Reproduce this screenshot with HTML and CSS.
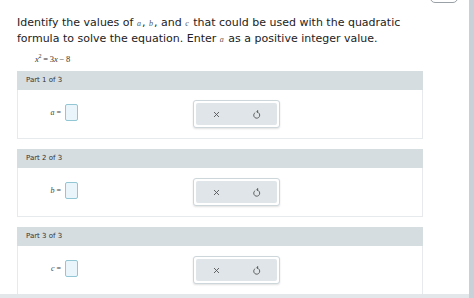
FILE: index.html
```html
<!doctype html>
<html lang="en">
  <head>
    <meta charset="UTF-8" />
    <meta name="viewport" content="width=device-width, initial-scale=1.0" />
    <title>Quadratic Formula Coefficients</title>
    <link rel="stylesheet" href="styles.css">
  </head>
  <body>
    <div class="app">
      <div class="page">
        <div class="toolbar">
          <span class="ebook">eBook</span>
        </div>

        <div class="question">
          Identify the values of <i class="var">a</i>, <i class="var">b</i>, and <i class="var">c</i> that could be used with the quadratic
          formula to solve the equation. Enter <i class="var">a</i> as a positive integer value.
        </div>

        <div class="equation">
          <i>x</i><sup>2</sup> = 3<i>x</i> &minus; 8
        </div>

        <!-- Part 1 -->
        <div class="part">
          <div class="part-header">Part 1 of 3</div>
          <div class="part-body">
            <div class="answer">
              <span class="label"><i>a</i> =</span>
              <span class="input-box"></span>
            </div>
            <div class="controls">
              <div class="controls-inner">
                <span class="ctrl">
                  <svg width="7" height="7" viewBox="0 0 7 7">
                    <path d="M1 1 L6 6 M6 1 L1 6" stroke="#555" stroke-width="0.9" />
                  </svg>
                </span>
                <span class="ctrl">
                  <svg width="8" height="9" viewBox="0 0 8 9">
                    <path d="M2.2 2.6 A3 3 0 1 0 4 2.2 L4 1" fill="none" stroke="#555" stroke-width="0.9" />
                    <path d="M4 0 L5.6 1.1 L4 2.2 Z" fill="#555" />
                  </svg>
                </span>
              </div>
            </div>
          </div>
        </div>

        <!-- Part 2 -->
        <div class="part">
          <div class="part-header">Part 2 of 3</div>
          <div class="part-body">
            <div class="answer">
              <span class="label"><i>b</i> =</span>
              <span class="input-box"></span>
            </div>
            <div class="controls">
              <div class="controls-inner">
                <span class="ctrl">
                  <svg width="7" height="7" viewBox="0 0 7 7">
                    <path d="M1 1 L6 6 M6 1 L1 6" stroke="#555" stroke-width="0.9" />
                  </svg>
                </span>
                <span class="ctrl">
                  <svg width="8" height="9" viewBox="0 0 8 9">
                    <path d="M2.2 2.6 A3 3 0 1 0 4 2.2 L4 1" fill="none" stroke="#555" stroke-width="0.9" />
                    <path d="M4 0 L5.6 1.1 L4 2.2 Z" fill="#555" />
                  </svg>
                </span>
              </div>
            </div>
          </div>
        </div>

        <!-- Part 3 -->
        <div class="part">
          <div class="part-header">Part 3 of 3</div>
          <div class="part-body">
            <div class="answer">
              <span class="label"><i>c</i> =</span>
              <span class="input-box"></span>
            </div>
            <div class="controls">
              <div class="controls-inner">
                <span class="ctrl">
                  <svg width="7" height="7" viewBox="0 0 7 7">
                    <path d="M1 1 L6 6 M6 1 L1 6" stroke="#555" stroke-width="0.9" />
                  </svg>
                </span>
                <span class="ctrl">
                  <svg width="8" height="9" viewBox="0 0 8 9">
                    <path d="M2.2 2.6 A3 3 0 1 0 4 2.2 L4 1" fill="none" stroke="#555" stroke-width="0.9" />
                    <path d="M4 0 L5.6 1.1 L4 2.2 Z" fill="#555" />
                  </svg>
                </span>
              </div>
            </div>
          </div>
        </div>
      </div>
      <div class="vscroll"></div>
      <div class="hbar"></div>
    </div>
  </body>
</html>
```

FILE: styles.css
```css
body {
  margin: 0;
  background: #fff;
  font-family: 'DejaVu Sans', Verdana, sans-serif;
  color: #222;
}

.app {
  display: grid;
  grid-template-columns: 1fr 5px;
  grid-template-rows: 1fr 4px;
  width: 474px;
  height: 298px;
  overflow: hidden;
}

.page {
  grid-column: 1;
  grid-row: 1;
  overflow: hidden;
  padding: 0 46px 0 17px;
}

.vscroll {
  grid-column: 2;
  grid-row: 1 / 3;
  background: #c9d1d8;
}

.hbar {
  grid-column: 1;
  grid-row: 2;
  background: #e3e7ea;
}

.toolbar {
  display: flex;
  justify-content: flex-end;
  height: 5px;
  margin-right: -35px;
  margin-top: -7px;
}

.ebook {
  display: inline-block;
  height: 8px;
  padding: 0 5px;
  border: 1px solid #9aa2a8;
  border-radius: 5px;
  font-size: 5px;
  line-height: 8px;
  color: #777;
}

.question {
  margin-top: 18px;
  font-size: 11px;
  line-height: 14.5px;
  color: #222;
}

.var {
  font-family: 'Liberation Serif', serif;
  font-size: 8px;
  padding-right: 1px;
  color: #555;
}

.equation {
  margin: 6px 0 0 18px;
  font-family: 'Liberation Serif', serif;
  font-size: 8.5px;
  line-height: 12px;
  color: #333;
  letter-spacing: -0.2px;
}

.equation sup {
  font-size: 6px;
  vertical-align: 4px;
  line-height: 0;
}

.part {
  margin-top: 10px;
}

.equation + .part {
  margin-top: 6px;
}

.part-header {
  height: 19px;
  background: #d6dde1;
  padding-left: 9px;
  font-size: 7px;
  line-height: 19px;
  color: #333;
}

.part-body {
  display: flex;
  align-items: center;
  height: 48px;
  border: 1px solid #e6eaec;
  border-top: none;
  background: #fff;
}

.answer {
  display: flex;
  align-items: center;
  justify-content: flex-end;
  gap: 4px;
  width: 60px;
  margin-top: -3px;
}

.label {
  font-family: 'Liberation Serif', serif;
  font-size: 8px;
  color: #444;
}

.input-box {
  display: inline-block;
  width: 11px;
  height: 15px;
  background: #e9f5fa;
  border: 1px solid #93c6d4;
  border-radius: 2px;
}

.controls {
  margin-left: 115px;
  padding: 2px;
  background: #fff;
  border: 1px solid #cdd6db;
  border-radius: 3px;
  box-shadow: 0 1px 2px rgba(0, 0, 0, 0.12);
}

.controls-inner {
  display: flex;
  align-items: center;
  justify-content: space-around;
  width: 81px;
  height: 22px;
  background: #dfe5e8;
  border-radius: 2px;
}

.ctrl {
  display: flex;
  align-items: center;
  justify-content: center;
}
```
